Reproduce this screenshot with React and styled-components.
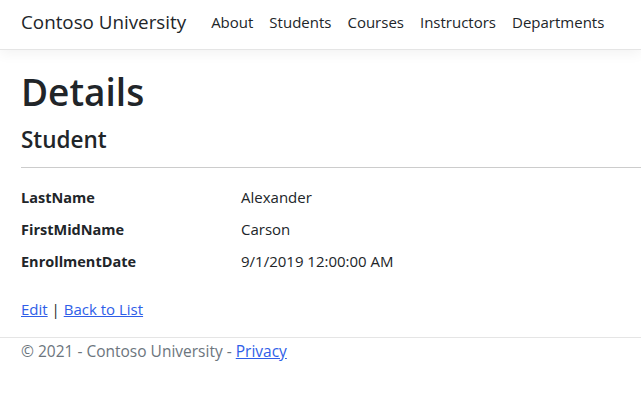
import styled, { createGlobalStyle } from 'styled-components';

const GlobalStyle = createGlobalStyle`
  html, body {
    margin: 0;
    padding: 0;
    background: #fff;
  }
  body {
    font-family: "Open Sans", "Noto Sans", sans-serif;
    font-size: 15px;
    color: #212529;
    overflow: hidden;
  }
`;

const Header = styled.header`
  height: 50px;
  box-sizing: border-box;
  border-bottom: 1px solid #e5e5e5;
  box-shadow: 0 4px 12px rgba(0, 0, 0, 0.05);
  display: flex;
  align-items: center;
  padding: 0 21px 6px;
`;

const Brand = styled.a`
  font-size: 18.8px;
  color: #212529;
  text-decoration: none;
  margin-right: 17px;
  white-space: nowrap;
`;

const Nav = styled.nav`
  display: flex;
`;

const NavLink = styled.a`
  padding: 0 8px;
  font-size: 15px;
  color: #212529;
  text-decoration: none;
  white-space: nowrap;
`;

const Main = styled.main`
  padding: 18px 0 0 21px;
`;

const Title = styled.h1`
  margin: 0;
  font-size: 37px;
  font-weight: 600;
  line-height: 48px;
`;

const Subtitle = styled.h4`
  margin: 10px 0 0;
  font-size: 22.5px;
  font-weight: 600;
  line-height: 28px;
`;

const Rule = styled.hr`
  margin: 13px 0 0;
  border: 0;
  border-top: 1px solid #cccccc;
`;

const List = styled.dl`
  margin: 13px 0 0;
  display: grid;
  grid-template-columns: 220px 1fr;
  grid-auto-rows: 32px;
  align-items: center;
`;

const Term = styled.dt`
  font-weight: 700;
  font-size: 14.5px;
`;

const Value = styled.dd`
  margin: 0;
  font-size: 15px;
`;

const Actions = styled.div`
  margin: 21px 0 17px;
  font-size: 15px;
  line-height: 22px;
`;

const Link = styled.a`
  color: #2f5ee8;
  text-decoration: underline;
`;

const Footer = styled.footer`
  border-top: 1px solid #e5e5e5;
  padding: 1px 21px 0;
  font-size: 15.5px;
  line-height: 24px;
  color: #6c757d;
`;

const details = [
  { label: 'LastName', value: 'Alexander' },
  { label: 'FirstMidName', value: 'Carson' },
  { label: 'EnrollmentDate', value: '9/1/2019 12:00:00 AM' },
];

const links = ['About', 'Students', 'Courses', 'Instructors', 'Departments'];

export default function App() {
  return (
    <>
      <GlobalStyle />
      <Header>
        <Brand href="#">Contoso University</Brand>
        <Nav>
          {links.map(l => (
            <NavLink key={l} href="#">{l}</NavLink>
          ))}
        </Nav>
      </Header>
      <Main>
        <Title>Details</Title>
        <Subtitle>Student</Subtitle>
        <Rule />
        <List>
          {details.map(d => [
            <Term key={d.label}>{d.label}</Term>,
            <Value key={d.label + '-v'}>{d.value}</Value>,
          ])}
        </List>
        <Actions>
          <Link href="#">Edit</Link> | <Link href="#">Back to List</Link>
        </Actions>
      </Main>
      <Footer>
        &copy; 2021 - Contoso University - <Link href="#">Privacy</Link>
      </Footer>
    </>
  );
}
